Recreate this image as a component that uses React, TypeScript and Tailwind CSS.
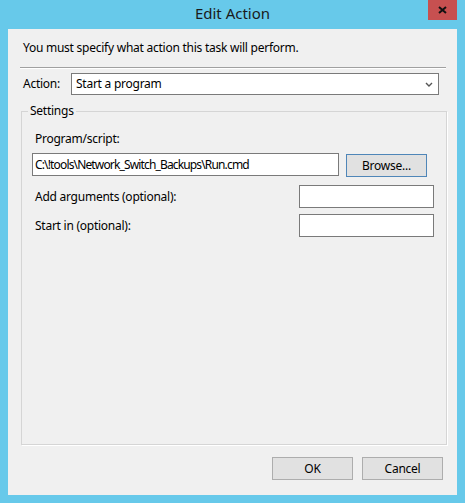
import React from "react";

const font = { fontFamily: '"Noto Sans", "Open Sans", sans-serif' };

function TextBox({ value, className }: { value?: string; className: string }) {
  return (
    <div
      className={`flex items-center border border-[#7a7a7a] bg-white pl-[2px] text-[12px] tracking-[-0.85px] text-black ${className}`}
    >
      {value}
    </div>
  );
}

function Button({ label, focused }: { label: string; focused?: boolean }) {
  return (
    <button
      className={`flex items-center justify-center border text-[12px] text-black ${
        focused ? "border-[#4f86b8] bg-[#e1e1e1]" : "border-[#adadad] bg-[#e1e1e1]"
      } w-[81px] h-[23px]`}
    >
      {label}
    </button>
  );
}

export default function App() {
  return (
    <div className="w-[465px] h-[503px] bg-[#67c9ea] flex flex-col select-none" style={font}>
      {/* Title bar */}
      <div className="relative h-[29px] flex items-center justify-center">
        <span className="text-[15px] text-[#1a1a1a] -mt-[2px]">Edit Action</span>
        <div className="absolute top-0 right-[8px] w-[29px] h-[20px] bg-[#c75050] flex items-center justify-center">
          <svg width="9" height="8" viewBox="0 0 9 8">
            <path d="M1 1 L8 7 M8 1 L1 7" stroke="#111" strokeWidth="2" />
          </svg>
        </div>
      </div>

      {/* Client area */}
      <div className="mx-[8px] mb-[8px] flex-1 bg-[#f0f0f0] flex flex-col text-[12px] tracking-[-0.25px] text-black">
        <div className="pt-[11px] pl-[15px] h-[27px] leading-[16px]">
          You must specify what action this task will perform.
        </div>
        <div className="mt-[11px] ml-[12px] mr-[11px] h-[2px] border-t border-[#a0a0a0] border-b border-b-white" />

        <div className="mt-[4px] pl-[15px] flex items-center">
          <span className="w-[48px]">Action:</span>
          <div className="w-[368px] h-[22px] border border-[#7a7a7a] bg-white flex items-center justify-between pl-[4px] pr-[5px]">
            <span>Start a program</span>
            <svg width="8" height="5" viewBox="0 0 8 5">
              <path d="M1 1 L4 4 L7 1" stroke="#555" strokeWidth="1.4" fill="none" />
            </svg>
          </div>
        </div>

        {/* Settings group */}
        <div className="relative mt-[16px] ml-[13px] mr-[10px] flex-1 border border-[#d5d5d5] shadow-[1px_1px_0_#fff] flex flex-col pr-[12px]">
          <span className="absolute -top-[9px] left-[6px] px-[2px] bg-[#f0f0f0] leading-[16px]">Settings</span>
          <div className="mt-[19px] pl-[13px] leading-[16px]">Program/script:</div>
          <div className="mt-[6px] pl-[10px] flex items-start">
            <TextBox value="C:\!tools\Network_Switch_Backups\Run.cmd" className="w-[307px] h-[23px]" />
            <div className="ml-[7px] mt-[1px]">
              <Button label="Browse..." focused />
            </div>
          </div>
          <div className="mt-[8px] pl-[13px] flex items-center justify-between">
            <span>Add arguments (optional):</span>
            <TextBox className="w-[135px] h-[23px]" />
          </div>
          <div className="mt-[6px] pl-[13px] flex items-center justify-between">
            <span>Start in (optional):</span>
            <TextBox className="w-[135px] h-[23px]" />
          </div>
        </div>

        <div className="mt-[12px] mb-[15px] mr-[14px] flex justify-end gap-[9px]">
          <Button label="OK" />
          <Button label="Cancel" />
        </div>
      </div>
    </div>
  );
}
